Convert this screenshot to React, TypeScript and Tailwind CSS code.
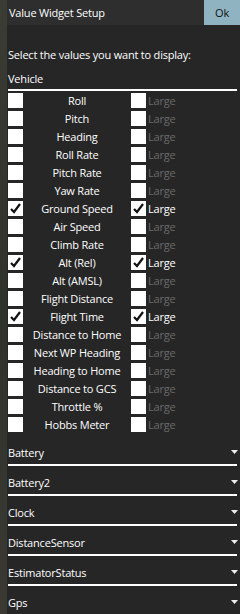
const ROWS: [string, boolean][] = [
  ['Roll', false],
  ['Pitch', false],
  ['Heading', false],
  ['Roll Rate', false],
  ['Pitch Rate', false],
  ['Yaw Rate', false],
  ['Ground Speed', true],
  ['Air Speed', false],
  ['Climb Rate', false],
  ['Alt (Rel)', true],
  ['Alt (AMSL)', false],
  ['Flight Distance', false],
  ['Flight Time', true],
  ['Distance to Home', false],
  ['Next WP Heading', false],
  ['Heading to Home', false],
  ['Distance to GCS', false],
  ['Throttle %', false],
  ['Hobbs Meter', false],
];

const GROUPS = ['Battery', 'Battery2', 'Clock', 'DistanceSensor', 'EstimatorStatus', 'Gps'];

function Check({ on }: { on: boolean }) {
  return (
    <div className="w-[15px] h-[15px] bg-white flex items-center justify-center shrink-0">
      {on && (
        <svg width="13" height="13" viewBox="0 0 13 13">
          <path d="M2 7 L5 10 L11 2" fill="none" stroke="#111" strokeWidth="2.2" />
        </svg>
      )}
    </div>
  );
}

export default function App() {
  return (
    <div
      className="w-[240px] h-[614px] overflow-hidden flex items-start bg-[#262626] text-white text-[11px] tracking-[-0.2px] leading-none"
      style={{ fontFamily: '"Open Sans", "DejaVu Sans", sans-serif' }}
    >
      <div className="w-[7px] h-[614px] shrink-0 bg-gradient-to-b from-[#3b3c34] via-[#2f322b] to-[#3a3a33]" />
      <div className="flex-1">
        <div className="h-[25px] flex bg-[#2e2e2e] items-stretch">
          <div className="flex-1 flex items-center pl-[2px]">Value Widget Setup</div>
          <div className="w-[36px] bg-[#8fb3c0] text-[#111] flex items-center justify-center">Ok</div>
        </div>
        <div className="pl-[1px] pr-[3px]">
          <div className="mt-[23px] h-[12px] flex items-center">Select the values you want to display:</div>
          <div className="mt-[12px] h-[12px] flex items-center">Vehicle</div>
          <div className="mt-[5px] h-[2px] bg-white" />
          <div className="mt-[2px]">
            {ROWS.map(([label, on]) => (
              <div key={label} className="h-[18px] flex items-start">
                <Check on={on} />
                <div className="w-[108px] shrink-0 text-center h-[15px] flex items-center justify-center">{label}</div>
                <Check on={on} />
                <div className={`ml-[2px] h-[15px] flex items-center ${on ? 'text-white' : 'text-[#6a6a6a]'}`}>Large</div>
              </div>
            ))}
          </div>
          <div className="mt-[1px]">
            {GROUPS.map((g) => (
              <div key={g} className="h-[30px] flex flex-col justify-end">
                <div className="flex items-center justify-between h-[15px]">
                  <span>{g}</span>
                  <svg width="7" height="5" viewBox="0 0 7 5" className="mr-[-1px]">
                    <path d="M0 0 H7 L3.5 4 Z" fill="#eee" />
                  </svg>
                </div>
                <div className="mt-[4px] h-[2px] bg-white" />
              </div>
            ))}
          </div>
        </div>
      </div>
    </div>
  );
}
